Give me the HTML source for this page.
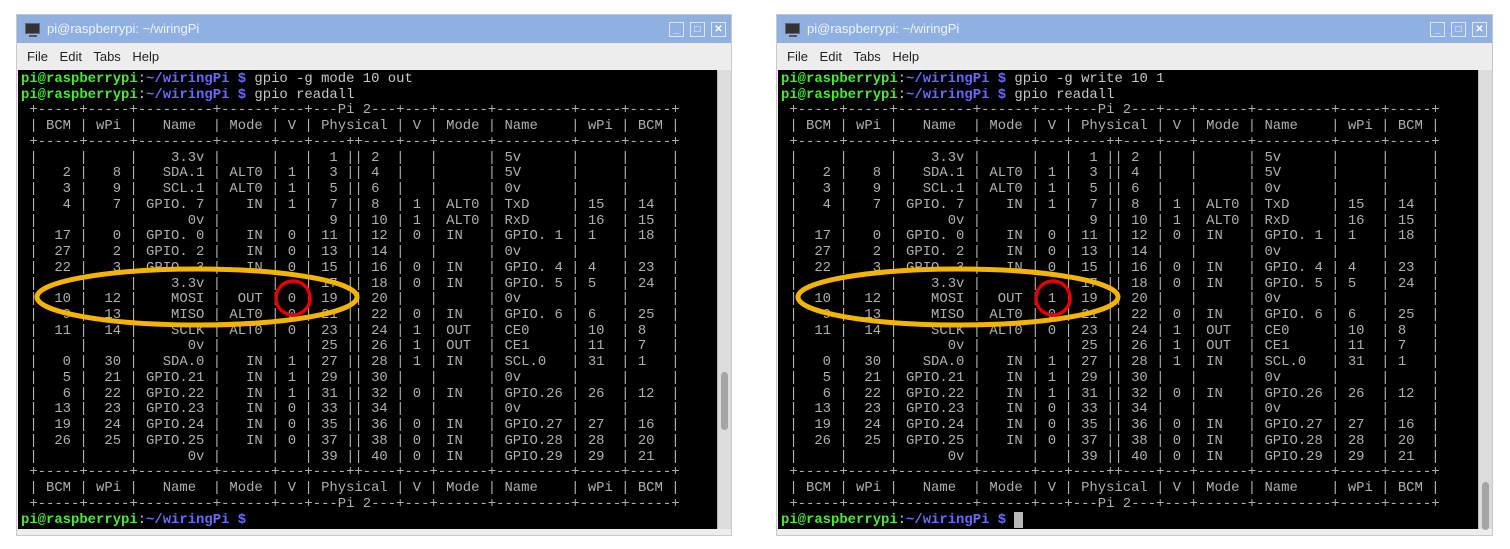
<!DOCTYPE html>
<html><head><meta charset="utf-8"><style>
*{margin:0;padding:0;box-sizing:border-box}
body{width:1510px;height:549px;background:#fff;position:relative;overflow:hidden;font-family:"Liberation Sans",sans-serif}
.win{position:absolute;top:14px;height:522px;background:#ededed;border:1px solid #c9c9c9}
.title{position:absolute;left:0;right:0;top:0;height:28px;background:#8fb0e0;color:#eef3fb;font-size:13px;line-height:28px;padding-left:30px}
.title .ic{position:absolute;left:8px;top:8px;width:15px;height:11px;background:#333;border:1px solid #666}
.title .ic:after{content:"";position:absolute;left:3px;top:11px;width:8px;height:2px;background:#555}
.btn{position:absolute;top:7px;width:15px;height:15px;background:#8fb0e0;border:1px solid #dde6f5;color:#fff;font-size:10px;line-height:13px;text-align:center;font-weight:bold}
.menu{position:absolute;left:0;right:0;top:28px;height:27px;font-size:13px;line-height:27px;color:#222;padding-left:10px;word-spacing:8px}
.term{position:absolute;left:1px;top:55px;bottom:6px;background:#000;overflow:hidden}
.sb{position:absolute;top:55px;bottom:6px;width:14px;background:#dcdcdc;border-left:1px solid #bbb}
.thumb{position:absolute;left:3px;width:7px;background:#a5a5a5;border-radius:4px}
pre{position:absolute;left:3px;top:2px;font-family:"Liberation Mono",monospace;font-size:13.9px;line-height:15.73px;color:#b0b0b0;white-space:pre}
.g{color:#4fe63a;font-weight:bold}.b{color:#6a6aff;font-weight:bold}.w{color:#c8c8c8}
.cur{background:#b8b8b8}
svg{position:absolute;left:0;top:0}
</style></head><body>

<div class="win" style="left:16px;width:716px">
 <div class="title"><span class="ic"></span>pi@raspberrypi: ~/wiringPi
  <span class="btn" style="left:652px">_</span><span class="btn" style="left:673px">□</span><span class="btn" style="left:694px">✕</span></div>
 <div class="menu">File Edit Tabs Help</div>
 <div class="term" style="width:699px"><pre><span class="g">pi@raspberrypi</span><span class="w">:</span><span class="b">~/wiringPi $</span><span class="w"> gpio -g mode 10 out</span>
<span class="g">pi@raspberrypi</span><span class="w">:</span><span class="b">~/wiringPi $</span><span class="w"> gpio readall</span>
 +-----+-----+---------+------+---+---Pi 2---+---+------+---------+-----+-----+
 | BCM | wPi |   Name  | Mode | V | Physical | V | Mode | Name    | wPi | BCM |
 +-----+-----+---------+------+---+----++----+---+------+---------+-----+-----+
 |     |     |    3.3v |      |   |  1 || 2  |   |      | 5v      |     |     |
 |   2 |   8 |   SDA.1 | ALT0 | 1 |  3 || 4  |   |      | 5V      |     |     |
 |   3 |   9 |   SCL.1 | ALT0 | 1 |  5 || 6  |   |      | 0v      |     |     |
 |   4 |   7 | GPIO. 7 |   IN | 1 |  7 || 8  | 1 | ALT0 | TxD     | 15  | 14  |
 |     |     |      0v |      |   |  9 || 10 | 1 | ALT0 | RxD     | 16  | 15  |
 |  17 |   0 | GPIO. 0 |   IN | 0 | 11 || 12 | 0 | IN   | GPIO. 1 | 1   | 18  |
 |  27 |   2 | GPIO. 2 |   IN | 0 | 13 || 14 |   |      | 0v      |     |     |
 |  22 |   3 | GPIO. 3 |   IN | 0 | 15 || 16 | 0 | IN   | GPIO. 4 | 4   | 23  |
 |     |     |    3.3v |      |   | 17 || 18 | 0 | IN   | GPIO. 5 | 5   | 24  |
 |  10 |  12 |    MOSI |  OUT | 0 | 19 || 20 |   |      | 0v      |     |     |
 |   9 |  13 |    MISO | ALT0 | 0 | 21 || 22 | 0 | IN   | GPIO. 6 | 6   | 25  |
 |  11 |  14 |    SCLK | ALT0 | 0 | 23 || 24 | 1 | OUT  | CE0     | 10  | 8   |
 |     |     |      0v |      |   | 25 || 26 | 1 | OUT  | CE1     | 11  | 7   |
 |   0 |  30 |   SDA.0 |   IN | 1 | 27 || 28 | 1 | IN   | SCL.0   | 31  | 1   |
 |   5 |  21 | GPIO.21 |   IN | 1 | 29 || 30 |   |      | 0v      |     |     |
 |   6 |  22 | GPIO.22 |   IN | 1 | 31 || 32 | 0 | IN   | GPIO.26 | 26  | 12  |
 |  13 |  23 | GPIO.23 |   IN | 0 | 33 || 34 |   |      | 0v      |     |     |
 |  19 |  24 | GPIO.24 |   IN | 0 | 35 || 36 | 0 | IN   | GPIO.27 | 27  | 16  |
 |  26 |  25 | GPIO.25 |   IN | 0 | 37 || 38 | 0 | IN   | GPIO.28 | 28  | 20  |
 |     |     |      0v |      |   | 39 || 40 | 0 | IN   | GPIO.29 | 29  | 21  |
 +-----+-----+---------+------+---+----++----+---+------+---------+-----+-----+
 | BCM | wPi |   Name  | Mode | V | Physical | V | Mode | Name    | wPi | BCM |
 +-----+-----+---------+------+---+---Pi 2---+---+------+---------+-----+-----+
<span class="g">pi@raspberrypi</span><span class="w">:</span><span class="b">~/wiringPi $</span></pre></div>
 <div class="sb" style="left:700px"><div class="thumb" style="top:302px;height:58px"></div></div>
</div>

<div class="win" style="left:776px;width:717px">
 <div class="title"><span class="ic"></span>pi@raspberrypi: ~/wiringPi
  <span class="btn" style="left:653px">_</span><span class="btn" style="left:674px">□</span><span class="btn" style="left:695px">✕</span></div>
 <div class="menu">File Edit Tabs Help</div>
 <div class="term" style="width:701px"><pre><span class="g">pi@raspberrypi</span><span class="w">:</span><span class="b">~/wiringPi $</span><span class="w"> gpio -g write 10 1</span>
<span class="g">pi@raspberrypi</span><span class="w">:</span><span class="b">~/wiringPi $</span><span class="w"> gpio readall</span>
 +-----+-----+---------+------+---+---Pi 2---+---+------+---------+-----+-----+
 | BCM | wPi |   Name  | Mode | V | Physical | V | Mode | Name    | wPi | BCM |
 +-----+-----+---------+------+---+----++----+---+------+---------+-----+-----+
 |     |     |    3.3v |      |   |  1 || 2  |   |      | 5v      |     |     |
 |   2 |   8 |   SDA.1 | ALT0 | 1 |  3 || 4  |   |      | 5V      |     |     |
 |   3 |   9 |   SCL.1 | ALT0 | 1 |  5 || 6  |   |      | 0v      |     |     |
 |   4 |   7 | GPIO. 7 |   IN | 1 |  7 || 8  | 1 | ALT0 | TxD     | 15  | 14  |
 |     |     |      0v |      |   |  9 || 10 | 1 | ALT0 | RxD     | 16  | 15  |
 |  17 |   0 | GPIO. 0 |   IN | 0 | 11 || 12 | 0 | IN   | GPIO. 1 | 1   | 18  |
 |  27 |   2 | GPIO. 2 |   IN | 0 | 13 || 14 |   |      | 0v      |     |     |
 |  22 |   3 | GPIO. 3 |   IN | 0 | 15 || 16 | 0 | IN   | GPIO. 4 | 4   | 23  |
 |     |     |    3.3v |      |   | 17 || 18 | 0 | IN   | GPIO. 5 | 5   | 24  |
 |  10 |  12 |    MOSI |  OUT | 1 | 19 || 20 |   |      | 0v      |     |     |
 |   9 |  13 |    MISO | ALT0 | 0 | 21 || 22 | 0 | IN   | GPIO. 6 | 6   | 25  |
 |  11 |  14 |    SCLK | ALT0 | 0 | 23 || 24 | 1 | OUT  | CE0     | 10  | 8   |
 |     |     |      0v |      |   | 25 || 26 | 1 | OUT  | CE1     | 11  | 7   |
 |   0 |  30 |   SDA.0 |   IN | 1 | 27 || 28 | 1 | IN   | SCL.0   | 31  | 1   |
 |   5 |  21 | GPIO.21 |   IN | 1 | 29 || 30 |   |      | 0v      |     |     |
 |   6 |  22 | GPIO.22 |   IN | 1 | 31 || 32 | 0 | IN   | GPIO.26 | 26  | 12  |
 |  13 |  23 | GPIO.23 |   IN | 0 | 33 || 34 |   |      | 0v      |     |     |
 |  19 |  24 | GPIO.24 |   IN | 0 | 35 || 36 | 0 | IN   | GPIO.27 | 27  | 16  |
 |  26 |  25 | GPIO.25 |   IN | 0 | 37 || 38 | 0 | IN   | GPIO.28 | 28  | 20  |
 |     |     |      0v |      |   | 39 || 40 | 0 | IN   | GPIO.29 | 29  | 21  |
 +-----+-----+---------+------+---+----++----+---+------+---------+-----+-----+
 | BCM | wPi |   Name  | Mode | V | Physical | V | Mode | Name    | wPi | BCM |
 +-----+-----+---------+------+---+---Pi 2---+---+------+---------+-----+-----+
<span class="g">pi@raspberrypi</span><span class="w">:</span><span class="b">~/wiringPi $</span> <span class="cur"> </span></pre></div>
 <div class="sb" style="left:701px"><div class="thumb" style="top:412px;height:48px"></div></div>
</div>

<svg width="1510" height="549">
 <ellipse cx="197" cy="297" rx="160" ry="28" fill="none" stroke="#f5b400" stroke-width="5"/>
 <circle cx="293" cy="298" r="17" fill="none" stroke="#e60000" stroke-width="3.5"/>
 <ellipse cx="958" cy="297" rx="160" ry="28" fill="none" stroke="#f5b400" stroke-width="5"/>
 <circle cx="1053" cy="298" r="17" fill="none" stroke="#e60000" stroke-width="3.5"/>
</svg>
</body></html>
